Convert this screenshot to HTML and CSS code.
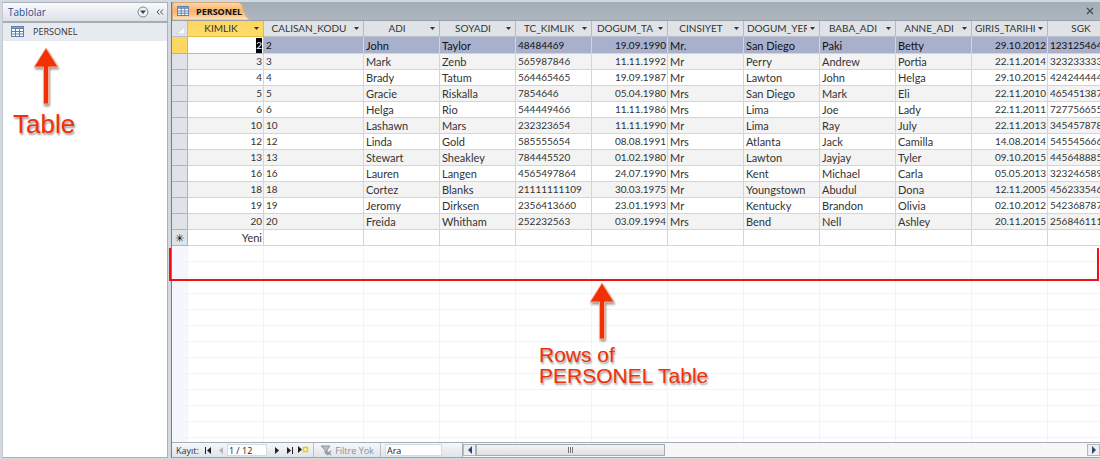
FILE: index.html
```
<!DOCTYPE html>
<html lang="tr">
<head>
    <meta charset="UTF-8">
    <meta name="viewport" content="width=device-width, initial-scale=1.0">
    <title>PERSONEL</title>
    <link rel="stylesheet" href="styles.css">
</head>
<body>
    <aside class="nav">
        <div class="nav-header">
            <h1>Tablolar</h1>
            <button class="nav-menu" aria-label="Menu">
                <svg width="12" height="12" viewBox="0 0 12 12"><circle cx="6" cy="6" r="5" fill="#eef1f4" stroke="#7d8794"/><path d="M3 4.500h6L6 8z" fill="#3c444e"/></svg>
            </button>
            <button class="nav-collapse" aria-label="Collapse">
                <svg width="8" height="8" viewBox="0 0 8 8" fill="none" stroke="#454f5c"><path d="M3.500 1.500L1 4l2.500 2.500M7 1.500L4.500 4L7 6.500"/></svg>
            </button>
        </div>
        <a class="nav-item" href="#personel">
            <svg class="table-icon" width="13" height="11" viewBox="0 0 13 11"><path d="M0 0h13v11H0z" fill="#5d7fae"/><path d="M1 1h11v1H1z" fill="#86a5cf"/><path d="M1 3h3v2H1zM5 3h3v2H5zM9 3h3v2H9zM1 6h3v1.500H1zM5 6h3v1.500H5zM9 6h3v1.500H9zM1 8.500h3V10H1zM5 8.500h3V10H5zM9 8.500h3V10H9z" fill="#fff"/></svg>
            PERSONEL
        </a>
        <div class="note note-table">
            <svg width="30" height="64" viewBox="0 0 30 64"><path d="M15 3L27 22H17.500V59H12.500V22H3z" fill="#f23005" stroke="#f4b08e" stroke-width="1"/></svg>
            <p>Table</p>
        </div>
    </aside>

    <main class="document">
        <div class="tabs">
            <a class="tab" id="personel" href="#personel">
                <svg class="tab-shape" width="80" height="18" viewBox="0 0 80 18"><defs><linearGradient id="tabFill" x1="0" y1="0" x2="0" y2="1"><stop offset="0" stop-color="#fbd9b0"/><stop offset=".45" stop-color="#f7b468"/><stop offset=".75" stop-color="#fbc78a"/><stop offset="1" stop-color="#fdebd3"/></linearGradient></defs><path d="M.5 18V3Q.5.500 3 .500H65C71 .500 70 5 73 11C75 16 76 17.500 80 17.500V18z" fill="url(#tabFill)" stroke="#d9a878"/></svg>
                <svg class="table-icon" width="12" height="10" viewBox="0 0 13 11"><path d="M0 0h13v11H0z" fill="#5d7fae"/><path d="M1 1h11v1H1z" fill="#86a5cf"/><path d="M1 3h3v2H1zM5 3h3v2H5zM9 3h3v2H9zM1 6h3v1.500H1zM5 6h3v1.500H5zM9 6h3v1.500H9zM1 8.500h3V10H1zM5 8.500h3V10H5zM9 8.500h3V10H9z" fill="#fff"/></svg>
                <span>PERSONEL</span>
            </a>
            <button class="tab-close" aria-label="Close">
                <svg width="8" height="8" viewBox="0 0 8 8" stroke="#3f4852" stroke-width="1.200"><path d="M1 1l6 6M7 1L1 7"/></svg>
            </button>
        </div>

        <div class="sheet-area">
            <div class="sheet">
                <table>
                    <colgroup>
                        <col class="col-selector">
                        <col class="col-data">
                        <col class="col-code">
                        <col class="col-data" span="10">
                    </colgroup>
                    <thead>
                        <tr id="headings"></tr>
                    </thead>
                    <tbody id="rows"></tbody>
                </table>
            </div>
            <div class="bracket"></div>
            <div class="note note-rows">
                <svg width="30" height="64" viewBox="0 0 30 64"><path d="M15 3L27 22H17.500V59H12.500V22H3z" fill="#f23005" stroke="#f4b08e" stroke-width="1"/></svg>
                <p>Rows of<br>PERSONEL Table</p>
            </div>
        </div>

        <footer class="status">
            <div class="navigator">
                <label for="record">Kayıt:</label>
                <button class="first" aria-label="First record"><svg width="6" height="7" viewBox="0 0 6 7"><path d="M0 0h1v7H0zM6 0v7L2 3.500z"/></svg></button>
                <button class="previous" aria-label="Previous record" disabled><svg width="4" height="7" viewBox="0 0 4 7"><path d="M4 0v7L0 3.500z"/></svg></button>
                <input class="record" id="record" type="text" value="1 / 12">
                <button class="next" aria-label="Next record"><svg width="4" height="7" viewBox="0 0 4 7"><path d="M0 0v7l4-3.500z"/></svg></button>
                <button class="last" aria-label="Last record"><svg width="6" height="7" viewBox="0 0 6 7"><path d="M0 0v7l4-3.500zM5 0h1v7H5z"/></svg></button>
                <button class="new" aria-label="New record"><svg width="11" height="8" viewBox="0 0 11 8"><path d="M0 0v7l4-3.500z"/><path d="M5.500 1.500h4v4h-4z" fill="#fff6c8" stroke="#f0c22e" stroke-width="1.500"/></svg></button>
            </div>
            <button class="filter" disabled>
                <svg width="12" height="11" viewBox="0 0 12 11"><path d="M1 1h9L7 5v4L5 8V5z" fill="#b9bec4" stroke="#8f969e"/><path d="M6 6l5 4M11 6l-4 4" stroke="#8f969e" stroke-width="1.500"/></svg>
                Filtre Yok
            </button>
            <div class="search">
                <input type="text" value="Ara" aria-label="Ara">
            </div>
            <div class="scrollbar">
                <button aria-label="Scroll left"><svg width="4" height="8" viewBox="0 0 4 8"><path d="M4 0v8L0 4z" fill="#2e4674"/></svg></button>
                <div class="track"><div class="thumb"><i></i><i></i><i></i></div></div>
                <button aria-label="Scroll right"><svg width="4" height="8" viewBox="0 0 4 8"><path d="M0 0v8l4-4z" fill="#2e4674"/></svg></button>
            </div>
        </footer>
    </main>

    <script>
        const headings = ["KIMLIK", "CALISAN_KODU", "ADI", "SOYADI", "TC_KIMLIK", "DOGUM_TA", "CINSIYET", "DOGUM_YERI", "BABA_ADI", "ANNE_ADI", "GIRIS_TARIHI", "SGK"];
        const people = [
            ["2", "2", "John", "Taylor", "48484469", "19.09.1990", "Mr.", "San Diego", "Paki", "Betty", "29.10.2012", "123125464"],
            ["3", "3", "Mark", "Zenb", "565987846", "11.11.1992", "Mr", "Perry", "Andrew", "Portia", "22.11.2014", "323233333"],
            ["4", "4", "Brady", "Tatum", "564465465", "19.09.1987", "Mr", "Lawton", "John", "Helga", "29.10.2015", "424244444"],
            ["5", "5", "Gracie", "Riskalla", "7854646", "05.04.1980", "Mrs", "San Diego", "Mark", "Eli", "22.11.2010", "465451387"],
            ["6", "6", "Helga", "Rio", "544449466", "11.11.1986", "Mrs", "Lima", "Joe", "Lady", "22.11.2011", "727756655"],
            ["10", "10", "Lashawn", "Mars", "232323654", "11.11.1990", "Mr", "Lima", "Ray", "July", "22.11.2013", "345457878"],
            ["12", "12", "Linda", "Gold", "585555654", "08.08.1991", "Mrs", "Atlanta", "Jack", "Camilla", "14.08.2014", "545545666"],
            ["13", "13", "Stewart", "Sheakley", "784445520", "01.02.1980", "Mr", "Lawton", "Jayjay", "Tyler", "09.10.2015", "445648885"],
            ["16", "16", "Lauren", "Langen", "4565497864", "24.07.1990", "Mrs", "Kent", "Michael", "Carla", "05.05.2013", "323246589"],
            ["18", "18", "Cortez", "Blanks", "21111111109", "30.03.1975", "Mr", "Youngstown", "Abudul", "Dona", "12.11.2005", "456233546"],
            ["19", "19", "Jeromy", "Dirksen", "2356413660", "23.01.1993", "Mr", "Kentucky", "Brandon", "Olivia", "02.10.2012", "542368787"],
            ["20", "20", "Freida", "Whitham", "252232563", "03.09.1994", "Mrs", "Bend", "Nell", "Ashley", "20.11.2015", "256846111"]
        ];
        const rightAligned = [0, 5, 10];
        const blankRows = 60;

        function addRow(className, mark, values) {
            const row = document.getElementById('rows').insertRow();
            row.className = className;
            row.insertCell().textContent = mark;
            values.forEach((value, i) => {
                const cell = row.insertCell();
                if (rightAligned.includes(i)) cell.classList.add('right');
                if (/^[\d.]+$/.test(value)) cell.classList.add('number');
                cell.textContent = value;
            });
            return row;
        }

        document.getElementById('headings').innerHTML =
            '<th class="corner"><svg width="9" height="8" viewBox="0 0 9 8"><path d="M9 0v8H0z" fill="#f7f9fa" stroke="#c9ced4"/></svg></th>' +
            headings.map(name => `<th><div class="heading"><span>${name}</span><svg width="5" height="3" viewBox="0 0 5 3"><path d="M0 0h5L2.500 3z" fill="#333"/></svg></div></th>`).join('');

        people.forEach((person, i) => addRow(i === 0 ? 'record-row selected' : 'record-row', '', person));
        document.querySelector('.selected .right').innerHTML = '<mark>2</mark>';

        const empty = Array(headings.length).fill('');
        addRow('record-row new-row', '✳', ['Yeni', ...empty.slice(1)]);
        for (let i = 0; i < blankRows; i++) addRow('blank-row', '', empty);
    </script>
</body>
</html>
```
FILE: styles.css
```
* {
    box-sizing: border-box;
}
body {
    margin: 0;
    padding: 2px 0 1px 2px;
    height: 100vh;
    display: flex;
    overflow: hidden;
    background-color: #d3d9df;
    color: #333;
    font-family: Lato, sans-serif;
    font-size: 11px;
}
button {
    display: flex;
    align-items: center;
    justify-content: center;
    border: 0;
    padding: 0;
    background: none;
    font: inherit;
    color: inherit;
}
input {
    border: 1px solid #d5dade;
    padding: 0 1px;
    min-width: 0;
    background-color: #fff;
    font: inherit;
    color: #222;
}
a {
    color: inherit;
    text-decoration: none;
}
p,
h1 {
    margin: 0;
}

/* Navigation pane */
.nav {
    position: relative;
    flex: none;
    width: 166px;
    border: 1px solid #a9b2bc;
    border-left-color: #c2c9d0;
    background-color: #fff;
    font-family: "Open Sans", sans-serif;
}
.nav-header {
    display: flex;
    align-items: center;
    gap: 7px;
    height: 20px;
    padding: 0 3px 0 5px;
    border-bottom: 2px solid #a3adb7;
    background: linear-gradient(#f8f9fa, #dde1e6);
}
.nav-header h1 {
    flex: 1;
    font-size: 10px;
    font-weight: 400;
    color: #2b4d92;
}
.nav-item {
    display: flex;
    align-items: center;
    gap: 9px;
    height: 18px;
    padding: 0 0 2px 8px;
    background-color: #e7ebef;
    font-size: 9px;
}
.table-icon {
    flex: none;
}

/* Document */
.document {
    flex: 1;
    min-width: 0;
    display: flex;
    flex-direction: column;
    margin-left: 3px;
    border-left: 1px solid #747c85;
    border-bottom: 1px solid #9ca5af;
    background-color: #fff;
}
.tabs {
    display: flex;
    align-items: center;
    justify-content: space-between;
    flex: none;
    height: 19px;
    padding-right: 6px;
    border-bottom: 1px solid #989fa7;
    background: linear-gradient(#a3adb8, #adb6bf);
}
.tab {
    position: relative;
    display: flex;
    align-items: center;
    gap: 7px;
    width: 80px;
    height: 18px;
    padding-left: 5px;
    color: #111;
    font-family: "Open Sans", sans-serif;
    font-size: 9px;
    font-weight: 700;
}
.tab-shape {
    position: absolute;
    left: 0;
    top: 0;
}
.tab .table-icon,
.tab span {
    position: relative;
}

/* Datasheet */
.sheet-area {
    position: relative;
    flex: 1;
    min-height: 0;
}
.sheet {
    height: 100%;
    overflow: hidden;
}
table {
    width: 952px;
    table-layout: fixed;
    border-collapse: separate;
    border-spacing: 0;
}
.col-selector {
    width: 16px;
}
.col-data {
    width: 76px;
}
.col-code {
    width: 100px;
}
th {
    height: 16px;
    padding: 0;
    border-right: 1px solid #b3bac3;
    border-bottom: 1px solid #b9c0ca;
    background-color: #dfe3e8;
    font-size: 10px;
    font-weight: 400;
}
th:nth-child(2) {
    background: linear-gradient(#fbd75f, #fddc6d);
    border-color: #e8b93b;
}
.corner {
    padding: 3px 2px 0 0;
    line-height: 0;
    text-align: right;
}
.heading {
    display: flex;
    align-items: center;
    gap: 3px;
    padding: 0 4px 0 3px;
    line-height: 15px;
}
.heading span {
    flex: 1;
    overflow: hidden;
    white-space: nowrap;
}
.heading svg {
    flex: none;
}
td {
    height: 16px;
    padding: 0 2px;
    border-right: 1px solid #d0d5e5;
    border-bottom: 1px solid #d0d5e5;
    line-height: 15px;
    white-space: nowrap;
}
.right {
    padding: 0 1px;
    text-align: right;
}
.number {
    font-size: 10px;
}
.record-row:nth-child(even) td {
    background-color: #f3f3f3;
}
.record-row td:first-child {
    padding: 0;
    border-color: #adb4be;
    background-color: #dfe3e8;
    color: #111;
    text-align: center;
}
.selected td {
    height: 17px;
    background-color: #a8b0cb;
    color: #111;
}
.selected td:first-child {
    background-color: #fdd663;
}
.selected td:nth-child(2) {
    border-color: #e8b93b;
    background-color: #fff;
}
mark {
    display: inline-block;
    background-color: #000;
    color: #fff;
}
.blank-row td {
    border-color: #f3f4f8;
}
.blank-row td:first-child {
    background-color: #f6f6fd;
}

/* Annotations */
.bracket {
    position: absolute;
    top: 227px;
    left: -3px;
    right: 1px;
    height: 33px;
    border: 2px solid #ee1218;
    border-top: 0;
}
.note {
    position: absolute;
    color: #f23005;
    font-family: "Liberation Sans", sans-serif;
    font-size: 21px;
    line-height: 21px;
    text-shadow: 1px 2px 2px #999;
    white-space: nowrap;
}
.note svg {
    display: block;
    filter: drop-shadow(1px 2px 1px #999);
}
.note-table {
    top: 42px;
    left: 10px;
    font-size: 26px;
}
.note-table svg {
    margin: 0 0 5px 18px;
}
.note-rows {
    top: 259px;
    left: 367px;
}
.note-rows svg {
    margin-left: 48px;
}

/* Status bar */
.status {
    display: flex;
    flex: none;
    height: 15px;
    border-top: 1px solid #a4adb7;
    background: linear-gradient(#f6f7f9, #e0e4e9);
    font-family: "Open Sans", sans-serif;
    font-size: 9px;
}
.status svg {
    flex: none;
}
.navigator {
    display: flex;
    align-items: center;
    gap: 8px;
    width: 142px;
    padding-left: 4px;
    border-right: 1px solid #b9c0c8;
}
.navigator button {
    fill: #222;
}
.navigator button:disabled {
    fill: #b0b5bb;
}
.navigator .first {
    margin-left: -2px;
}
.navigator .record {
    width: 40px;
    height: 12px;
    margin-left: -4px;
}
.navigator .new {
    margin-left: -3px;
}
.filter {
    gap: 3px;
    width: 67px;
    border-right: 1px solid #b9c0c8;
    color: #8b9198;
}
.search {
    display: flex;
    align-items: center;
    width: 82px;
    padding-left: 4px;
    border-right: 1px solid #a4adb7;
}
.search input {
    width: 57px;
    height: 12px;
}
.scrollbar {
    display: flex;
    flex: 1;
    padding: 1px 0;
    background-color: #f7f7f8;
}
.scrollbar button {
    width: 13px;
    border: 1px solid #b3b8bf;
    background-color: #eceef0;
}
.track {
    flex: 1;
}
.thumb {
    display: flex;
    align-items: center;
    justify-content: center;
    gap: 1px;
    width: 31%;
    height: 12px;
    border: 1px solid #a6abb1;
    background: linear-gradient(#f4f4f5, #dedfe1);
}
.thumb i {
    width: 1px;
    height: 6px;
    background-color: #777;
}
```
